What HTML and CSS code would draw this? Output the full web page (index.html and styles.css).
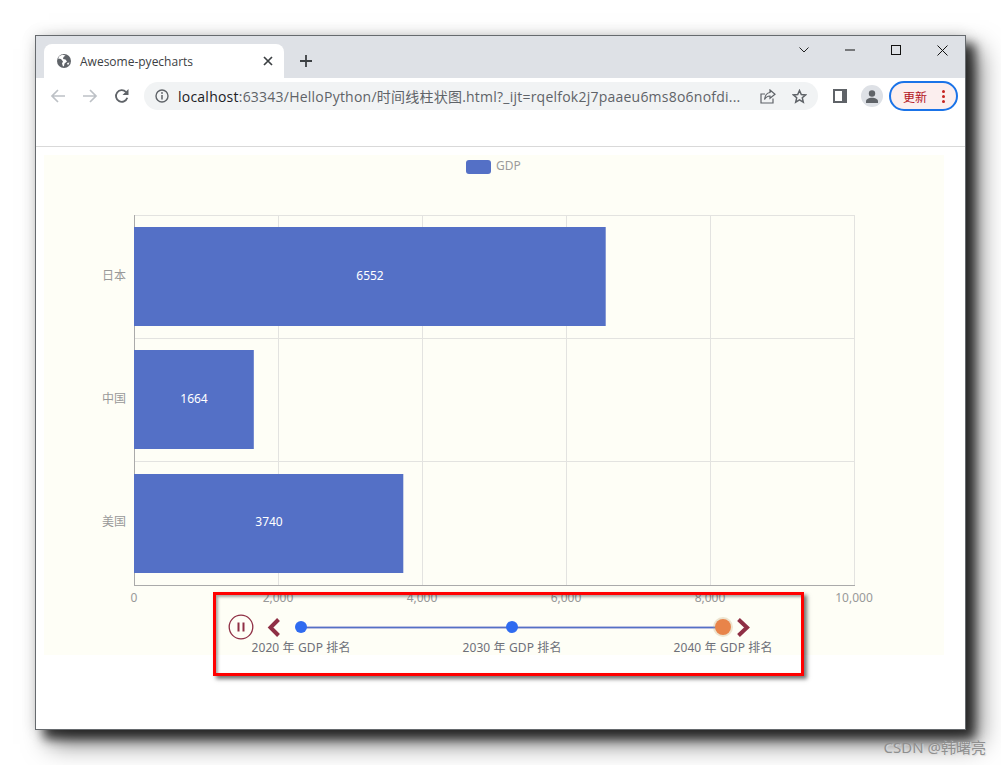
FILE: index.html
```html
<!DOCTYPE html>
<html lang="zh">
<head>
<meta charset="utf-8">
<title>Awesome-pyecharts</title>
<link rel="stylesheet" href="styles.css">
</head>
<body>
<div class="window">
  <div class="tabstrip">
    <div class="tab">
      <svg class="favicon" width="16" height="16" viewBox="0 0 16 16"><circle cx="8" cy="8" r="7" fill="#5f6368"/><path d="M2 5.500l3 .5 2 2.500-1 2 1 3 1-.5.5-2.500 2.500-2-1.500-2-2.500-.5.5-2 2-1.500-3-.8-3 1.300z" fill="#fff"/><path d="M11 10l2.500-.5-1.500 3z" fill="#fff"/></svg>
      <span class="tab-title">Awesome-pyecharts</span>
      <svg class="tab-close" width="10" height="10" viewBox="0 0 10 10"><path d="M1 1l8 8M9 1l-8 8" stroke="#3c4043" stroke-width="1.700"/></svg>
    </div>
    <svg class="newtab" width="12" height="12" viewBox="0 0 12 12"><path d="M6 0v12M0 6h12" stroke="#3c4043" stroke-width="1.800"/></svg>
    <div class="winctl">
      <svg class="ctl ctl-chev" width="10" height="6" viewBox="0 0 10 6"><path d="M.5.5L5 5 9.500.5" fill="none" stroke="#222" stroke-width="1"/></svg>
      <svg class="ctl ctl-min" width="10" height="2" viewBox="0 0 10 2"><path d="M0 1h10" stroke="#111" stroke-width="1"/></svg>
      <svg class="ctl ctl-max" width="10" height="10" viewBox="0 0 10 10"><rect x=".5" y=".5" width="9" height="9" fill="none" stroke="#111"/></svg>
      <svg class="ctl ctl-x" width="11" height="11" viewBox="0 0 11 11"><path d="M.5.5l10 10M10.500.5l-10 10" stroke="#111" stroke-width="1"/></svg>
    </div>
  </div>
  <div class="toolbar">
    <svg class="nav nav-back" width="16" height="16" viewBox="0 0 16 16"><path d="M15 8H2M8 2L2 8l6 6" fill="none" stroke="#bdc1c6" stroke-width="1.700"/></svg>
    <svg class="nav nav-fwd" width="16" height="16" viewBox="0 0 16 16"><path d="M1 8h13M8 2l6 6-6 6" fill="none" stroke="#bdc1c6" stroke-width="1.700"/></svg>
    <svg class="nav nav-reload" width="16" height="16" viewBox="0 0 16 16"><path d="M13.300 9.800A5.800 5.800 0 1 1 12 4" fill="none" stroke="#5f6368" stroke-width="1.800"/><path d="M14.500 1v6h-6z" fill="#5f6368"/></svg>
    <div class="omnibox">
      <svg class="info" width="14" height="14" viewBox="0 0 14 14"><circle cx="7" cy="7" r="6" fill="none" stroke="#5f6368" stroke-width="1.400"/><path d="M7 6v4.500" stroke="#5f6368" stroke-width="1.500"/><circle cx="7" cy="4" r=".9" fill="#5f6368"/></svg>
      <span class="url"><span class="url-host">localhost</span>:63343/HelloPython/时间线柱状图.html?_ijt=rqelfok2j7paaeu6ms8o6nofdi...</span>
      <svg class="share" width="16" height="15" viewBox="0 0 16 15"><path d="M13 9.500V14H1V5h4" fill="none" stroke="#5f6368" stroke-width="1.200"/><path d="M10 1l5 4.200-5 4V7C7.500 7 6 8 4.500 10.500 5 6.500 7 3.800 10 3.500z" fill="none" stroke="#5f6368" stroke-width="1.200"/></svg>
      <svg class="star" width="15" height="15" viewBox="0 0 15 15"><path d="M7.500 1.500l1.800 4 4.300.4-3.300 2.900 1 4.300-3.800-2.300-3.800 2.300 1-4.300L1.400 5.900l4.300-.4z" fill="none" stroke="#5f6368" stroke-width="1.500"/></svg>
    </div>
    <svg class="panel" width="14" height="14" viewBox="0 0 14 14"><rect width="14" height="14" fill="#5f6368"/><rect x="2" y="2" width="7" height="10" fill="#fff"/></svg>
    <div class="avatar"><svg width="14" height="13" viewBox="0 0 14 13"><circle cx="7" cy="3.500" r="3.200" fill="#5f6368"/><path d="M1 13v-1.500C1 9 4 7.800 7 7.800s6 1.200 6 3.700V13z" fill="#5f6368"/></svg></div>
    <div class="update"><span class="update-label">更新</span><span class="dots"><i></i><i></i><i></i></span></div>
  </div>
  <div class="spacer"></div>
  <svg class="chart" width="929" height="582" viewBox="36 147 929 582">
    <rect class="chart-bg" x="44" y="155" width="900" height="500"/>
    <rect class="legend-key" x="466" y="160" width="25" height="14" rx="3"/>
    <text class="legend-text" x="496" y="170">GDP</text>
    <g class="grid">
      <path d="M278.500 215v370M422.500 215v370M566.500 215v370M710.500 215v370M854.500 215v370M134 215.500h721M134 338.500h721M134 461.500h721"/>
    </g>
    <path class="axis" d="M134.500 215v371M134 585.500h721"/>
    <rect class="bar" x="134" y="227" width="471.700" height="99"/>
    <rect class="bar" x="134" y="350" width="119.800" height="99"/>
    <rect class="bar" x="134" y="474" width="269.300" height="99"/>
    <g class="bar-label">
      <text x="370" y="280">6552</text>
      <text x="194" y="403">1664</text>
      <text x="269" y="526">3740</text>
    </g>
    <g class="cat-label">
      <text x="126" y="280">日本</text>
      <text x="126" y="403">中国</text>
      <text x="126" y="526">美国</text>
    </g>
    <g class="val-label">
      <text x="134" y="602">0</text>
      <text x="278" y="602">2,000</text>
      <text x="422" y="602">4,000</text>
      <text x="566" y="602">6,000</text>
      <text x="710" y="602">8,000</text>
      <text x="854" y="602">10,000</text>
    </g>
    <circle class="play-ring" cx="241" cy="627" r="11.800"/>
    <path class="play-bars" d="M238.500 622.500v9M243.500 622.500v9"/>
    <path class="chev" d="M278.500 619.500l-8 8 8 8"/>
    <path class="chev" d="M738.500 619.500l8.500 8-8.500 8"/>
    <path class="line-halo" d="M301 627.500h422"/>
    <path class="line" d="M301 627.500h422"/>
    <circle class="dot" cx="301" cy="627" r="6"/>
    <circle class="dot" cx="512" cy="627" r="6"/>
    <circle class="dot-glow" cx="723" cy="627" r="10"/>
    <circle class="dot-now" cx="723" cy="627" r="8"/>
    <g class="tl-label">
      <text x="301" y="652">2020 年 GDP 排名</text>
      <text x="512" y="652">2030 年 GDP 排名</text>
      <text x="723" y="652">2040 年 GDP 排名</text>
    </g>
  </svg>
  <div class="highlight"></div>
</div>
<div class="watermark">CSDN @韩曙亮</div>
</body>
</html>
```
FILE: styles.css
```css
* { box-sizing: border-box; }
html, body { margin: 0; padding: 0; background: #fff; }
body {
  width: 1001px;
  height: 765px;
  position: relative;
  overflow: hidden;
  padding: 35px 0 0 35px;
  font-family: "Noto Sans", "Noto Sans CJK SC", sans-serif;
}
.window {
  position: relative;
  width: 931px;
  height: 695px;
  background: #fff;
  border: 1px solid #666a6e;
  box-shadow: 9px 9px 10px rgba(0, 0, 0, .7), 14px 14px 24px rgba(0, 0, 0, .5), 0 0 14px rgba(0, 0, 0, .12);
  display: flex;
  flex-direction: column;
}
.tabstrip {
  height: 42px;
  flex: none;
  background: #dee1e6;
  display: flex;
  align-items: flex-end;
  padding-left: 8px;
  position: relative;
}
.tab {
  width: 240px;
  height: 34px;
  background: #fff;
  border-radius: 8px 8px 0 0;
  display: flex;
  align-items: center;
  padding: 0 11px 0 12px;
}
.favicon { flex: none; }
.tab-title {
  margin-left: 8px;
  font-size: 12px;
  color: #3c4043;
  flex: 1;
  font-family: "Open Sans", sans-serif;
}
.tab-close { flex: none; }
.newtab { margin: 0 0 11px 16px; }
.winctl { position: absolute; top: 0; right: 0; width: 170px; height: 30px; }
.ctl { position: absolute; }
.ctl-chev { left: 4px; top: 11px; }
.ctl-min { left: 50px; top: 13px; }
.ctl-max { left: 96px; top: 9px; }
.ctl-x { left: 142px; top: 9px; }
.toolbar {
  height: 36px;
  flex: none;
  display: flex;
  align-items: center;
  background: #fff;
  padding-left: 14px;
}
.nav { flex: none; }
.nav-fwd { margin-left: 16px; }
.nav-reload { margin-left: 16px; }
.omnibox {
  margin-left: 14px;
  width: 674px;
  height: 28px;
  border-radius: 14px;
  background: #f1f3f4;
  display: flex;
  align-items: center;
  padding: 0 11px 0 11px;
  flex: none;
}
.info { flex: none; }
.url {
  margin-left: 9px;
  font-size: 14px;
  letter-spacing: .23px;
  color: #5f6368;
  flex: 1;
  white-space: nowrap;
  overflow: hidden;
  font-family: "Open Sans", "Noto Sans CJK SC", sans-serif;
}
.url-host { color: #202124; }
.share { flex: none; margin-right: 16px; }
.star { flex: none; }
.panel { flex: none; margin-left: 15px; }
.avatar {
  flex: none;
  margin-left: 14px;
  width: 22px;
  height: 22px;
  border-radius: 50%;
  background: #dee1e6;
  display: flex;
  align-items: center;
  justify-content: center;
}
.update {
  flex: none;
  margin-left: 6px;
  width: 69px;
  height: 30px;
  border: 2px solid #1a73e8;
  border-radius: 15px;
  background: #fbeeee;
  display: flex;
  align-items: center;
  padding-left: 12px;
}
.update-label {
  font-size: 12px;
  color: #b3141d;
  font-family: "Noto Sans CJK SC", sans-serif;
}
.dots {
  margin-left: 15px;
  display: flex;
  flex-direction: column;
  gap: 2px;
}
.dots i { width: 3px; height: 3px; border-radius: 50%; background: #c5221f; display: block; }
.spacer { height: 33px; flex: none; border-bottom: 1px solid #d9d9d9; }
.chart { display: block; flex: none; }
.chart-bg { fill: #fefef6; }
.legend-key { fill: #5470c6; }
.legend-text { font-size: 12px; fill: #9b9b9b; }
.grid path { stroke: #e3e3e0; fill: none; stroke-width: 1; }
.bar { fill: #5470c6; }
.axis { stroke: #aaa; fill: none; stroke-width: 1; }
.bar-label text { font-size: 12px; fill: #fff; text-anchor: middle; }
.cat-label text { font-size: 12px; fill: #999; text-anchor: end; font-family: "Noto Sans CJK SC", sans-serif; }
.val-label text { font-size: 12px; fill: #999; text-anchor: middle; }
.play-ring { fill: none; stroke: #8f2f45; stroke-width: 1.300; }
.play-bars { stroke: #8f2f45; stroke-width: 2; fill: none; }
.chev { fill: none; stroke: #8f2f45; stroke-width: 4; }
.line-halo { stroke: #d3cfe6; stroke-width: 2.500; fill: none; }
.line { stroke: #5470c6; stroke-width: 1.300; fill: none; }
.dot { fill: #2f6bf0; }
.dot-glow { fill: rgba(200, 170, 120, .3); }
.dot-now { fill: #e8844a; }
.tl-label text { font-size: 12px; letter-spacing: .12px; fill: #6e7079; text-anchor: middle; font-family: "Noto Sans", "Noto Sans CJK SC", sans-serif; }
.highlight {
  position: absolute;
  left: 177px;
  top: 556px;
  width: 591px;
  height: 84px;
  border: 3px solid #f00;
  box-shadow: 3px 3px 4px rgba(0, 0, 0, .55), inset 2px 2px 3px rgba(0, 0, 0, .35);
}
.watermark {
  position: absolute;
  right: 15px;
  bottom: 8px;
  font-size: 15px;
  color: #8f8f8f;
  text-shadow: 1px 1px 1px #ddd;
  font-family: "Noto Sans", "Noto Sans CJK SC", sans-serif;
}
```
